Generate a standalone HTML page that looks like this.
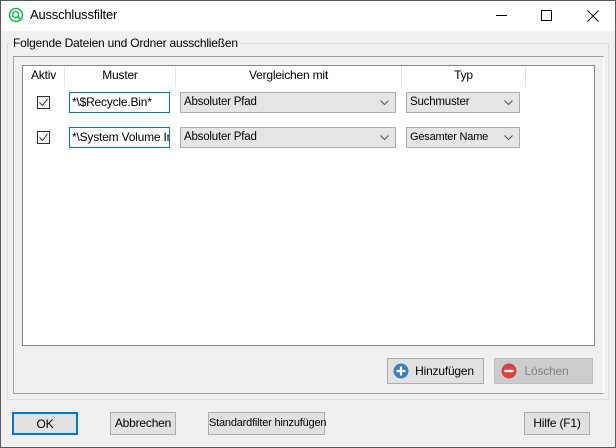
<!DOCTYPE html>
<html><head><meta charset="utf-8"><style>
*{box-sizing:border-box;margin:0;padding:0}
body{width:616px;height:448px;overflow:hidden;background:#f0f0f0;font-family:"Liberation Sans",sans-serif;font-size:12px;letter-spacing:-0.2px;color:#000;position:relative}
.a{position:absolute;white-space:nowrap}
.win{left:0;top:0;width:616px;height:448px;border:1px solid #5a5a5a}
.title{left:1px;top:1px;width:614px;height:30px;background:#fff}
.btn{position:absolute;background:#e1e1e1;border:1px solid #adadad;text-align:center;line-height:20px;font-size:12px;white-space:nowrap}
.combo{position:absolute;background:#e5e5e5;border:1px solid #acacac;height:21px;line-height:19px;padding-left:3px;white-space:nowrap;font-size:11.5px}
.combo svg{position:absolute;right:6px;top:7px}
.inp{position:absolute;background:#fff;border:1px solid #0078d7;height:21px;line-height:19px;padding-left:2px;overflow:hidden;white-space:nowrap}
.cb{position:absolute;width:13px;height:13px;border:1px solid #333;background:#fff}
.hd{position:absolute;top:66px;height:21px;line-height:19px;text-align:center;border-right:1px solid #e5e5e5}
</style></head><body>
<div class="a win"></div>
<div class="a title"></div>
<svg class="a" style="left:8px;top:7px" width="16" height="16" viewBox="0 0 16 16"><circle cx="8" cy="8" r="6.5" fill="none" stroke="#1db954" stroke-width="1.6"/><circle cx="7.5" cy="7.5" r="3" fill="none" stroke="#1db954" stroke-width="1.5"/><path d="M9.7 9.7l2.3 2.3" stroke="#1db954" stroke-width="1.6"/></svg>
<div class="a" style="left:30px;top:7px;font-size:13px">Ausschlussfilter</div>
<div class="a" style="left:496px;top:15px;width:11px;height:1px;background:#000"></div>
<div class="a" style="left:541px;top:10px;width:11px;height:11px;border:1px solid #000"></div>
<svg class="a" style="left:587px;top:10px" width="12" height="12"><path d="M0.5 0.5l11 11M11.5 0.5l-11 11" stroke="#000" stroke-width="1"/></svg>

<div class="a" style="left:7px;top:43px;width:602px;height:357px;border:1px solid #dcdcdc"></div>
<div class="a" style="left:10px;top:36px;background:#f0f0f0;padding:0 3px">Folgende Dateien und Ordner ausschließen</div>
<div class="a" style="left:13px;top:56px;width:591px;height:338px;border:1px solid #a0a0a0;border-right-color:#fff;border-bottom-color:#a0a0a0;background:#f0f0f0"></div>
<div class="a" style="left:22px;top:65px;width:573px;height:281px;border:1px solid #828790;background:#fff"></div>
<div class="hd" style="left:23px;width:42px">Aktiv</div>
<div class="hd" style="left:65px;width:111px">Muster</div>
<div class="hd" style="left:176px;width:226px">Vergleichen mit</div>
<div class="hd" style="left:402px;width:124px">Typ</div>

<div class="cb" style="left:37px;top:96px"><svg width="11" height="11"><path d="M1.5 5.5l3 3 5-6.5" fill="none" stroke="#333" stroke-width="1"/></svg></div>
<div class="inp" style="left:69px;top:92px;width:101px">*\$Recycle.Bin*</div>
<div class="combo" style="left:180px;top:92px;width:216px">Absoluter Pfad<svg width="9" height="6"><path d="M0.5 0.5l4 4 4-4" fill="none" stroke="#555"/></svg></div>
<div class="combo" style="left:406px;top:92px;width:114px">Suchmuster<svg width="9" height="6"><path d="M0.5 0.5l4 4 4-4" fill="none" stroke="#555"/></svg></div>

<div class="cb" style="left:37px;top:131px"><svg width="11" height="11"><path d="M1.5 5.5l3 3 5-6.5" fill="none" stroke="#333" stroke-width="1"/></svg></div>
<div class="inp" style="left:69px;top:127px;width:101px">*\System Volume In</div>
<div class="combo" style="left:180px;top:127px;width:216px">Absoluter Pfad<svg width="9" height="6"><path d="M0.5 0.5l4 4 4-4" fill="none" stroke="#555"/></svg></div>
<div class="combo" style="left:406px;top:127px;width:114px;font-size:11px">Gesamter Name<svg width="9" height="6"><path d="M0.5 0.5l4 4 4-4" fill="none" stroke="#555"/></svg></div>

<div class="btn" style="left:387px;top:358px;width:97px;height:26px;line-height:24px;padding-left:18px">Hinzufügen</div>
<svg class="a" style="left:393px;top:363px" width="16" height="16"><circle cx="8" cy="8" r="7.5" fill="#3c7fc1"/><path d="M8 3.5v9M3.5 8h9" stroke="#fff" stroke-width="2.2"/></svg>
<div class="btn" style="left:494px;top:358px;width:99px;height:26px;line-height:24px;padding-left:6px;background:#cccccc;border-color:#bfbfbf;color:#838383">Löschen</div>
<svg class="a" style="left:501px;top:363px" width="16" height="16"><circle cx="8" cy="8" r="7.5" fill="#d9403f"/><path d="M3.5 8h9" stroke="#fff" stroke-width="2.4"/></svg>

<div class="btn" style="left:12px;top:412px;width:66px;height:23px;border:2px solid #0078d7">OK</div>
<div class="btn" style="left:110px;top:412px;width:66px;height:23px">Abbrechen</div>
<div class="btn" style="left:208px;top:412px;width:117px;height:23px;font-size:11px">Standardfilter hinzufügen</div>
<div class="btn" style="left:524px;top:412px;width:66px;height:23px">Hilfe (F1)</div>
</body></html>
